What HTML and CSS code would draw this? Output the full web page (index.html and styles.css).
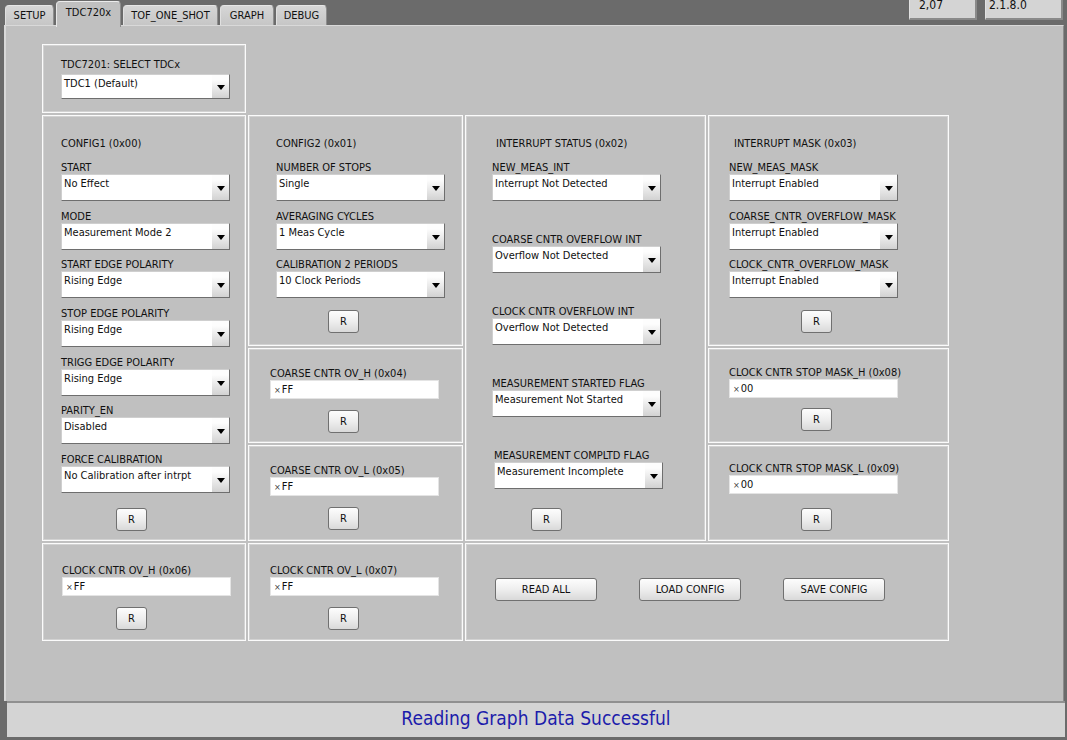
FILE: index.html
```html
<!DOCTYPE html>
<html>
<head>
  <title>TDC720x</title>
  <link rel="stylesheet" href="styles.css">
</head>
<body>
<div class="topbar">
  <div class="tabs">
    <div class="tab tab-setup">SETUP</div>
    <div class="tab tab-tdc active">TDC720x</div>
    <div class="tab tab-tof">TOF_ONE_SHOT</div>
    <div class="tab tab-graph">GRAPH</div>
    <div class="tab tab-debug">DEBUG</div>
  </div>
  <div class="info-boxes">
    <div class="info">2,07</div>
    <div class="info info-wide">2.1.8.0</div>
  </div>
</div>

<div class="window">
  <div class="reg-grid">

    <section class="panel p-select">
      <span class="lbl">TDC7201: SELECT TDCx</span>
      <div class="ring ring-short"><span class="ring-value">TDC1 (Default)</span><span class="ring-arrow"></span></div>
    </section>

    <section class="panel p-config1">
      <div class="title">CONFIG1 (0x00)</div>
      <div class="field"><span class="lbl">START</span>
        <div class="ring"><span class="ring-value">No Effect</span><span class="ring-arrow"></span></div></div>
      <div class="field"><span class="lbl">MODE</span>
        <div class="ring"><span class="ring-value">Measurement Mode 2</span><span class="ring-arrow"></span></div></div>
      <div class="field"><span class="lbl">START EDGE POLARITY</span>
        <div class="ring"><span class="ring-value">Rising Edge</span><span class="ring-arrow"></span></div></div>
      <div class="field"><span class="lbl">STOP EDGE POLARITY</span>
        <div class="ring"><span class="ring-value">Rising Edge</span><span class="ring-arrow"></span></div></div>
      <div class="field"><span class="lbl">TRIGG EDGE POLARITY</span>
        <div class="ring"><span class="ring-value">Rising Edge</span><span class="ring-arrow"></span></div></div>
      <div class="field"><span class="lbl">PARITY_EN</span>
        <div class="ring"><span class="ring-value">Disabled</span><span class="ring-arrow"></span></div></div>
      <div class="field"><span class="lbl">FORCE CALIBRATION</span>
        <div class="ring"><span class="ring-value">No Calibration after intrpt</span><span class="ring-arrow"></span></div></div>
      <button class="btn-r">R</button>
    </section>

    <section class="panel p-config2">
      <div class="title">CONFIG2 (0x01)</div>
      <div class="field"><span class="lbl">NUMBER OF STOPS</span>
        <div class="ring"><span class="ring-value">Single</span><span class="ring-arrow"></span></div></div>
      <div class="field"><span class="lbl">AVERAGING CYCLES</span>
        <div class="ring"><span class="ring-value">1 Meas Cycle</span><span class="ring-arrow"></span></div></div>
      <div class="field"><span class="lbl">CALIBRATION 2 PERIODS</span>
        <div class="ring"><span class="ring-value">10 Clock Periods</span><span class="ring-arrow"></span></div></div>
      <button class="btn-r">R</button>
    </section>

    <section class="panel p-coarse-h">
      <span class="lbl">COARSE CNTR OV_H (0x04)</span>
      <div class="hex"><span class="hex-x">&times;</span>FF</div>
      <button class="btn-r">R</button>
    </section>

    <section class="panel p-coarse-l">
      <span class="lbl">COARSE CNTR OV_L (0x05)</span>
      <div class="hex"><span class="hex-x">&times;</span>FF</div>
      <button class="btn-r">R</button>
    </section>

    <section class="panel p-status">
      <div class="title">INTERRUPT STATUS (0x02)</div>
      <div class="field"><span class="lbl">NEW_MEAS_INT</span>
        <div class="ring"><span class="ring-value">Interrupt Not Detected</span><span class="ring-arrow"></span></div></div>
      <div class="field"><span class="lbl">COARSE CNTR OVERFLOW INT</span>
        <div class="ring"><span class="ring-value">Overflow Not Detected</span><span class="ring-arrow"></span></div></div>
      <div class="field"><span class="lbl">CLOCK CNTR OVERFLOW INT</span>
        <div class="ring"><span class="ring-value">Overflow Not Detected</span><span class="ring-arrow"></span></div></div>
      <div class="field"><span class="lbl">MEASUREMENT STARTED FLAG</span>
        <div class="ring"><span class="ring-value">Measurement Not Started</span><span class="ring-arrow"></span></div></div>
      <div class="field field-shift"><span class="lbl">MEASUREMENT COMPLTD FLAG</span>
        <div class="ring"><span class="ring-value">Measurement Incomplete</span><span class="ring-arrow"></span></div></div>
      <button class="btn-r">R</button>
    </section>

    <section class="panel p-mask">
      <div class="title">INTERRUPT MASK (0x03)</div>
      <div class="field"><span class="lbl">NEW_MEAS_MASK</span>
        <div class="ring"><span class="ring-value">Interrupt Enabled</span><span class="ring-arrow"></span></div></div>
      <div class="field"><span class="lbl">COARSE_CNTR_OVERFLOW_MASK</span>
        <div class="ring"><span class="ring-value">Interrupt Enabled</span><span class="ring-arrow"></span></div></div>
      <div class="field"><span class="lbl">CLOCK_CNTR_OVERFLOW_MASK</span>
        <div class="ring"><span class="ring-value">Interrupt Enabled</span><span class="ring-arrow"></span></div></div>
      <button class="btn-r">R</button>
    </section>

    <section class="panel p-stop-h">
      <span class="lbl">CLOCK CNTR STOP MASK_H (0x08)</span>
      <div class="hex"><span class="hex-x">&times;</span>00</div>
      <button class="btn-r">R</button>
    </section>

    <section class="panel p-stop-l">
      <span class="lbl">CLOCK CNTR STOP MASK_L (0x09)</span>
      <div class="hex"><span class="hex-x">&times;</span>00</div>
      <button class="btn-r">R</button>
    </section>

    <section class="panel p-clock-h">
      <span class="lbl">CLOCK CNTR OV_H (0x06)</span>
      <div class="hex"><span class="hex-x">&times;</span>FF</div>
      <button class="btn-r">R</button>
    </section>

    <section class="panel p-clock-l">
      <span class="lbl">CLOCK CNTR OV_L (0x07)</span>
      <div class="hex"><span class="hex-x">&times;</span>FF</div>
      <button class="btn-r">R</button>
    </section>

    <section class="panel p-actions">
      <button class="btn-wide">READ ALL</button>
      <button class="btn-wide">LOAD CONFIG</button>
      <button class="btn-wide">SAVE CONFIG</button>
    </section>

  </div>
</div>

<div class="statusbar">Reading Graph Data Successful</div>
</body>
</html>
```

FILE: styles.css
```css
:root {
  --desk-bg: #6b6b6b;
  --panel-bg: #c0c0c0;
  --light-edge: #d9d9d9;
  --dark-edge: #8c8c8c;
  --text-color: #101010;
}

html, body {
  margin: 0;
  height: 740px;
  overflow: hidden;
}

body {
  background-color: var(--desk-bg);
  font-family: "DejaVu Sans Condensed", "DejaVu Sans", sans-serif;
  font-stretch: condensed;
  font-size: 11px;
  color: var(--text-color);
}

/* ---- tab strip ---- */

.topbar {
  display: flex;
  align-items: flex-start;
  height: 25px;
}

.tabs {
  display: flex;
  align-items: flex-end;
  gap: 2px;
  height: 25px;
  margin-left: 5px;
}

.tab {
  height: 20px;
  line-height: 20px;
  text-align: center;
  box-sizing: border-box;
  background: linear-gradient(#d6d6d6, #c6c6c6);
  border-top: 1px solid #e6e6e6;
  border-left: 1px solid #e0e0e0;
  border-right: 1px solid #8e8e8e;
  border-radius: 4px 4px 0 0;
}

.tab-setup { width: 49px; }
.tab-tdc   { width: 65px; }
.tab-tof   { width: 95px; }
.tab-graph { width: 54px; }
.tab-debug { width: 51px; }

.tab.active {
  position: relative;
  z-index: 1;
  height: 26px;
  line-height: 22px;
  margin-bottom: -2px;
  background: var(--panel-bg);
  border-top-color: #ececec;
  border-left: 1px solid #e8e8e8;
}

.info-boxes {
  display: flex;
  gap: 8px;
  margin-left: auto;
  margin-right: 4px;
}

.info {
  width: 68px;
  height: 20px;
  box-sizing: border-box;
  padding-left: 9px;
  line-height: 11px;
  font-size: 12px;
  background-color: #d4d4d4;
  border-right: 2px solid #8a8a8a;
  border-bottom: 2px solid #8a8a8a;
  border-left: 1px solid #e2e2e2;
}

.info-wide {
  width: 78px;
  padding-left: 3px;
}

/* ---- main panel ---- */

.window {
  width: 1060px;
  height: 676px;
  margin-left: 4px;
  box-sizing: border-box;
  padding: 18px 0 0 36px;
  background-color: var(--panel-bg);
  border-top: 1px solid var(--light-edge);
  border-left: 2px solid var(--light-edge);
  border-right: 1px solid var(--dark-edge);
}

.reg-grid {
  display: grid;
  grid-template-columns: 204px 215px 241px 241px;
  grid-template-rows: 69px 231px 95px 96px 98px;
  gap: 2px;
}

.panel {
  --pad-top: 18px;
  --pad-left: 20px;
  --r-left: 55px;
  --r-top: 11px;
  box-sizing: border-box;
  padding: var(--pad-top) 0 0 var(--pad-left);
  border: 1px solid #fbfbfb;
  box-shadow: inset 1px 1px 0 #d2d2d2, inset -1px -1px 0 #d2d2d2;
}

.p-select   { grid-column: 1; grid-row: 1; --pad-top: 13px; --pad-left: 18px; }
.p-config1  { grid-column: 1; grid-row: 2 / 5; --pad-top: 21px; --pad-left: 18px; --r-left: 55px; --r-top: 15px; }
.p-config2  { grid-column: 2; grid-row: 2; --pad-top: 21px; --pad-left: 27px; --r-left: 52px; --r-top: 12px; }
.p-coarse-h { grid-column: 2; grid-row: 3; --pad-left: 21px; --r-left: 58px; }
.p-coarse-l { grid-column: 2; grid-row: 4; --pad-left: 21px; --r-left: 58px; }
.p-status   { grid-column: 3; grid-row: 2 / 5; --pad-top: 21px; --pad-left: 26px; --r-left: 39px; --r-top: 19px; }
.p-mask     { grid-column: 4; grid-row: 2; --pad-top: 21px; --pad-left: 20px; --r-left: 72px; --r-top: 12px; }
.p-stop-h   { grid-column: 4; grid-row: 3; --pad-top: 17px; --pad-left: 20px; --r-left: 72px; --r-top: 10px; }
.p-stop-l   { grid-column: 4; grid-row: 4; --pad-top: 16px; --pad-left: 20px; --r-left: 72px; --r-top: 14px; }
.p-clock-h  { grid-column: 1; grid-row: 5; --pad-top: 20px; --pad-left: 19px; --r-left: 54px; }
.p-clock-l  { grid-column: 2; grid-row: 5; --pad-top: 20px; --pad-left: 21px; --r-left: 58px; }

.p-actions {
  grid-column: 3 / 5;
  grid-row: 5;
  display: flex;
  align-items: flex-start;
  gap: 42px;
  --pad-top: 34px;
  --pad-left: 29px;
}

.title {
  line-height: 13px;
  margin-bottom: 11px;
}

.p-status .title { margin-left: 4px; }
.p-mask .title { margin-left: 5px; }

.lbl {
  display: block;
  line-height: 13px;
  white-space: nowrap;
}

.p-select .lbl { margin-bottom: 3px; }

.field {
  margin-bottom: 8.7px;
}

.p-status .field {
  margin-bottom: 32px;
}

.p-status .field:last-of-type,
.field:last-of-type {
  margin-bottom: 0;
}

.field-shift {
  margin-left: 2px;
}

/* ---- ring (dropdown) ---- */

.ring {
  display: flex;
  width: 169px;
  height: 27px;
  box-sizing: border-box;
  background-color: #fff;
  border: 1px solid;
  border-color: #cfcfcf #6e6e6e #6e6e6e #cfcfcf;
}

.ring-short {
  height: 25px;
}

.ring-value {
  flex: 1;
  padding: 2px 0 0 2px;
  line-height: 13px;
  white-space: nowrap;
  overflow: hidden;
}

.ring-arrow {
  display: flex;
  align-items: center;
  justify-content: center;
  width: 17px;
  background: linear-gradient(#fdfdfd 20%, #d2d2d2);
}

.ring-arrow::after {
  content: "";
  border-left: 4.5px solid transparent;
  border-right: 4.5px solid transparent;
  border-top: 5px solid #000;
  margin-top: 2px;
}

/* ---- hex input ---- */

.hex {
  width: 169px;
  height: 19px;
  box-sizing: border-box;
  padding-left: 3px;
  line-height: 17px;
  background-color: #fff;
  border: 1px solid #e4e4e4;
}

.hex-x {
  font-size: 9px;
  color: #404040;
  margin-right: 1px;
}

/* ---- buttons ---- */

button {
  font-family: inherit;
  font-size: 11px;
  font-stretch: condensed;
  color: var(--text-color);
  border: 1px solid #707070;
  border-radius: 3px;
  background: linear-gradient(#fdfdfd, #eeeeee 50%, #d9d9d9);
  padding: 0;
  cursor: pointer;
}

.btn-r {
  display: block;
  width: 31px;
  height: 23px;
  margin-top: var(--r-top);
  margin-left: var(--r-left);
}

.btn-wide {
  width: 102px;
  height: 23px;
}

/* ---- status bar ---- */

.statusbar {
  width: 1058px;
  height: 36px;
  margin-left: 7px;
  box-sizing: border-box;
  border-top: 2px solid #909090;
  background-color: #d4d4d4;
  color: #1c1cab;
  font-size: 19px;
  line-height: 30px;
  text-align: center;
}
```
